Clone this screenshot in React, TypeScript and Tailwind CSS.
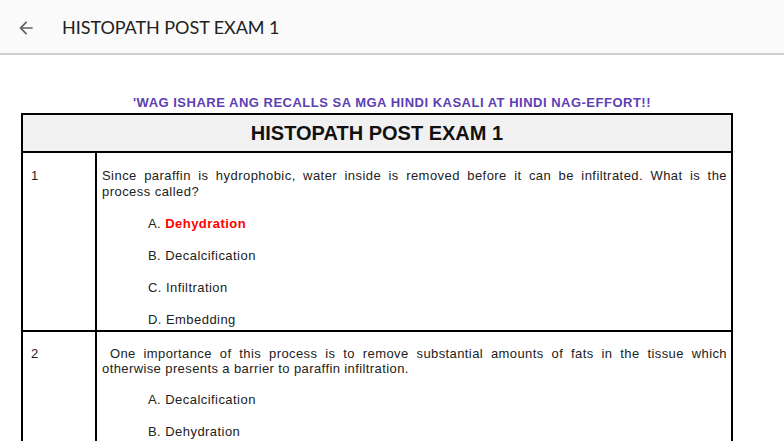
import React from "react";

const Arrow = () => (
  <svg width="20" height="20" viewBox="0 0 24 24" className="text-[#616161]">
    <path d="M20 11H7.83l5.59-5.59L12 4l-8 8 8 8 1.41-1.41L7.83 13H20v-2z" fill="currentColor" />
  </svg>
);

type Q = { n: number; text: string; opts: { l: string; t: string; correct?: boolean }[]; condensed?: boolean };

const qs: Q[] = [
  {
    n: 1,
    text: "Since paraffin is hydrophobic, water inside is removed before it can be infiltrated. What is the process called?",
    opts: [
      { l: "A.", t: "Dehydration", correct: true },
      { l: "B.", t: "Decalcification" },
      { l: "C.", t: "Infiltration" },
      { l: "D.", t: "Embedding" },
    ],
  },
  {
    n: 2,
    text: "\u00a0One importance of this process is to remove substantial amounts of fats in the tissue which otherwise presents a barrier to paraffin infiltration.",
    condensed: true,
    opts: [
      { l: "A.", t: "Decalcification" },
      { l: "B.", t: "Dehydration" },
      { l: "C.", t: "Infiltration" },
      { l: "D.", t: "Embedding" },
    ],
  },
];

export default function App() {
  return (
    <div className="w-[784px] h-[441px] overflow-hidden bg-white" style={{ fontFamily: '"Liberation Sans", Arial, sans-serif' }}>
      <div className="h-[55px] bg-[#fafafa] border-b-2 border-[#cdcdcd] flex items-center">
        <div className="w-[62px] flex items-center pl-[16px] pt-[2px]">
          <Arrow />
        </div>
        <div className="text-[18px] text-[#212121] tracking-[-0.05px] pt-[1px]" style={{ fontFamily: 'Lato, "Noto Sans", sans-serif' }}>
          HISTOPATH POST EXAM 1
        </div>
      </div>
      <div className="pt-[40px]">
        <div className="w-full text-center text-[13px] font-bold text-[#5c3fb5] leading-[16px] tracking-[0.5px] mb-[2px]">
          'WAG ISHARE ANG RECALLS SA MGA HINDI KASALI AT HINDI NAG-EFFORT!!
        </div>
        <div className="ml-[21px] w-[712px] border-2 border-black">
          <div className="h-[38px] bg-[#f1f1f1] border-b-2 border-black flex items-center justify-center text-[20px] font-bold text-[#111]">
            HISTOPATH POST EXAM 1
          </div>
          {qs.map((q, i) => (
            <div key={q.n} className={`grid grid-cols-[74px_1fr] ${i > 0 ? "border-t-2 border-black" : ""}`}>
              <div className={`border-r-2 border-black pl-[8px] text-[13px] leading-[16px] text-[#222] ${q.condensed ? "pt-[14px]" : "pt-[15px]"}`}>{q.n}</div>
              <div className={`pl-[5px] pr-[4px] pb-[2px] text-[#222] ${q.condensed ? "pt-[14px]" : "pt-[15px]"}`}>
                <p className={q.condensed ? "text-justify text-[13px] leading-[15px] tracking-[0.4px]" : "text-justify text-[13px] leading-[16px] tracking-[0.45px]"}>
                  {q.text}
                </p>
                {q.opts.map((o) => (
                  <p key={o.l} className="pl-[46px] text-[13px] leading-[16px] tracking-[0.45px] mt-[16px]">
                    {o.l}{" "}
                    {o.correct ? <span className="font-bold text-[#ff0000]">{o.t}</span> : o.t}
                  </p>
                ))}
              </div>
            </div>
          ))}
        </div>
      </div>
    </div>
  );
}
